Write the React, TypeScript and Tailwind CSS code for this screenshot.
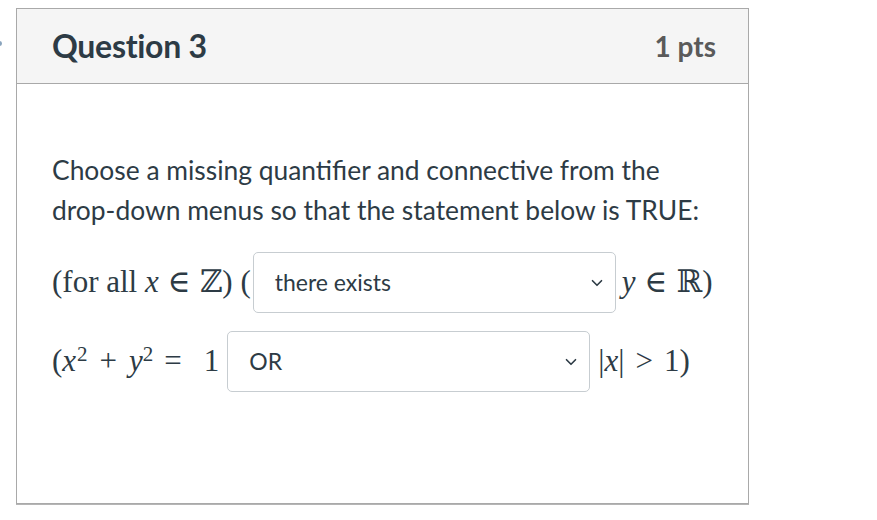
import { ChevronDown } from 'lucide-react'

const serif = { fontFamily: '"Liberation Serif", "DejaVu Serif", serif' }

function Dropdown({ value, width }: { value: string; width: string }) {
  return (
    <div
      className={`${width} h-[61px] shrink-0 flex items-center justify-between rounded-[5px] border border-[#c7cdd1] bg-white pl-[21px] pr-[9px] text-[23px] text-[#2d3b45]`}
      style={{ fontFamily: 'Lato, "Noto Sans", sans-serif' }}
    >
      <span className="-mt-[1px]">{value}</span>
      <ChevronDown className="w-[18px] h-[18px] text-[#2d3b45]" strokeWidth={2.2} />
    </div>
  )
}

function I({ children }: { children: string }) {
  return <span className="italic">{children}</span>
}

// relation / binary operator with TeX-ish spacing
function Op({ children, l = 'ml-[9px]', r = 'mr-[9px]' }: { children: string; l?: string; r?: string }) {
  return <span className={`${l} ${r}`}>{children}</span>
}

export default function App() {
  return (
    <div className="relative w-[877px] h-[520px] bg-white pt-[8px] pl-[16px]">
      {/* leftover bullet from the page */}
      <div className="absolute left-[-3px] top-[41px] w-[5px] h-[5px] rounded-full bg-[#8aa4bd]" />

      <div
        className="w-[733px] h-[496px] border border-[#a9a9a9] shadow-[0_1px_0_#b5b5b5] flex flex-col"
        style={{ fontFamily: 'Lato, "Noto Sans", sans-serif' }}
      >
        {/* header */}
        <div className="h-[75px] shrink-0 bg-[#f5f5f5] border-b border-[#a9a9a9] flex items-center justify-between pl-[35px] pr-[32px]">
          <h2 className="text-[32px] font-bold text-[#2d3b45] tracking-[-0.3px]">Question 3</h2>
          <div className="text-[28px] font-bold text-[#5a5a5a]">1 pts</div>
        </div>

        {/* body */}
        <div className="pl-[35px] pt-[66px] text-[#2d3b45]">
          <p className="text-[26.4px] leading-[40px]">
            Choose a missing quantifier and connective from the
            <br />
            drop-down menus so that the statement below is TRUE:
          </p>

          <div className="mt-[22px] flex items-center text-[31px]" style={serif}>
            <span className="whitespace-pre">
              (for all <I>x</I>
              <Op>∈</Op>ℤ) (
            </span>
            <div className="ml-[2px]">
              <Dropdown value="there exists" width="w-[363px]" />
            </div>
            <span className="ml-[6px] whitespace-pre">
              <I>y</I>
              <Op>∈</Op>ℝ)
            </span>
          </div>

          <div className="mt-[18px] flex items-center text-[31px]" style={serif}>
            <span className="whitespace-pre">
              (<I>x</I>
              <sup className="text-[21px] ml-[1px]">2</sup>
              <Op l="ml-[12px]" r="mr-[12px]">+</Op>
              <I>y</I>
              <sup className="text-[21px]">2</sup>
              <Op l="ml-[11px]" r="mr-[22px]">=</Op>1
            </span>
            <div className="ml-[8px]">
              <Dropdown value="OR" width="w-[363px]" />
            </div>
            <span className="ml-[8px] whitespace-pre">
              |<I>x</I>|<Op l="ml-[11px]" r="mr-[11px]">&gt;</Op>1)
            </span>
          </div>
        </div>
      </div>
    </div>
  )
}
